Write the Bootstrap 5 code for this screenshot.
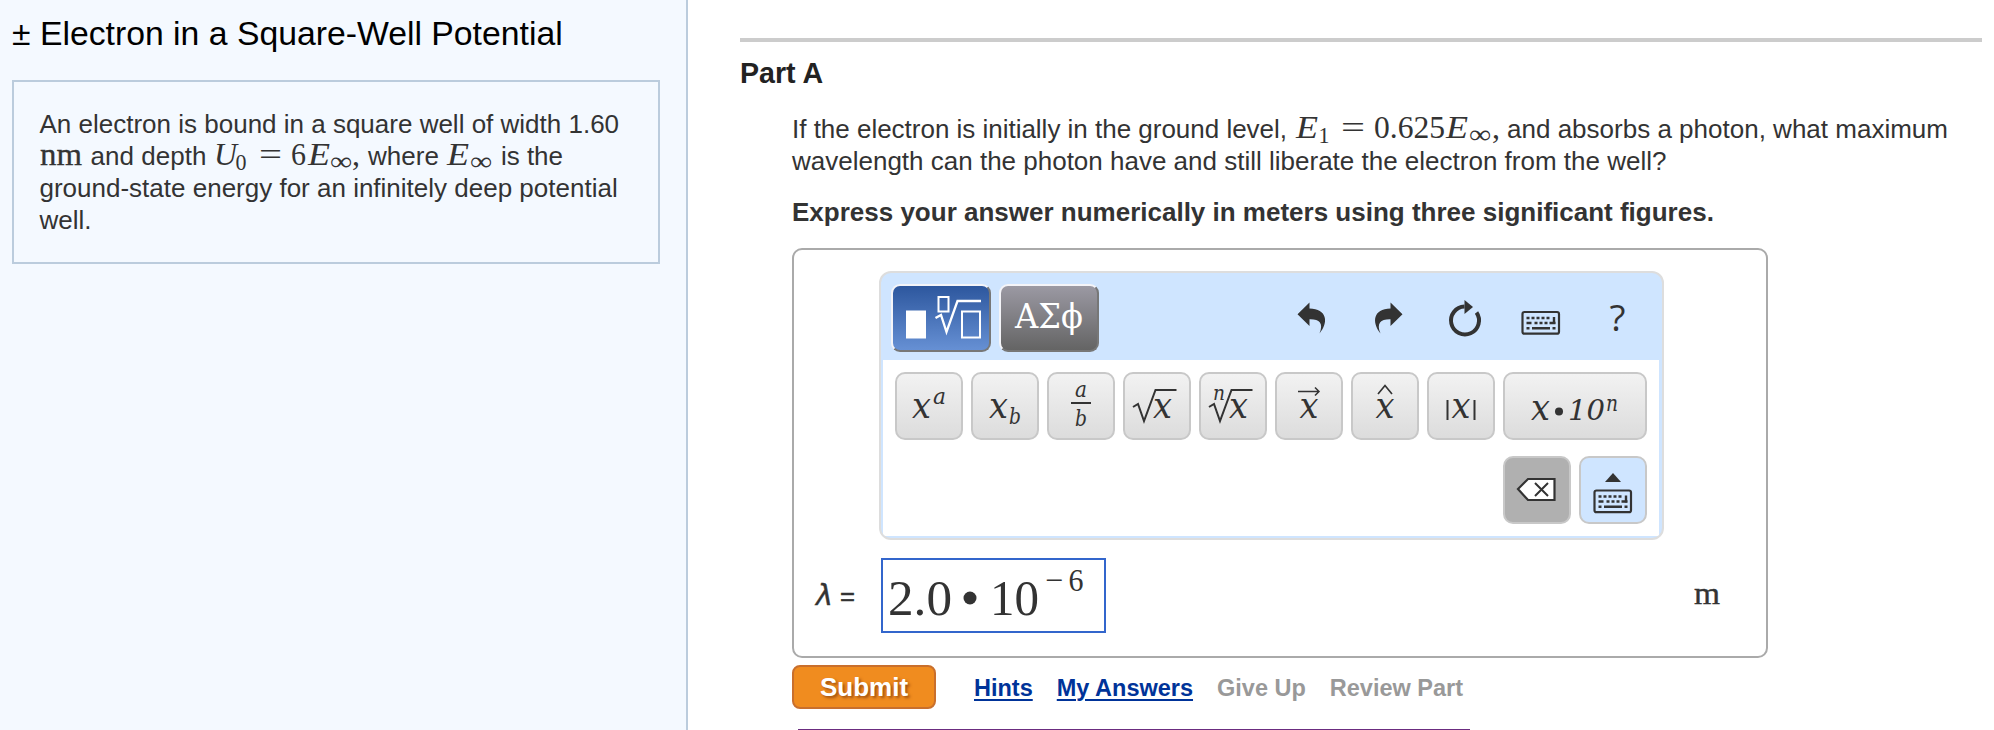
<!DOCTYPE html>
<html lang="en">
<head>
<meta charset="utf-8">
<title>Electron in a Square-Well Potential</title>
<link href="https://cdn.jsdelivr.net/npm/bootstrap@5.3.0/dist/css/bootstrap.min.css" rel="stylesheet">
<style>
body{font-family:"Liberation Sans",Arial,sans-serif;font-size:26px;line-height:32px;color:#333;background:#fff;height:730px;overflow:hidden}
.side{width:688px;height:730px;background:#f4f9ff;border-right:2px solid #bcd;padding:13px 26px 0 12px}
.side h1{font-size:33.75px;line-height:40px;color:#000;margin:0 0 27px;white-space:nowrap}
.intro{border:2px solid #bcd;height:184px;padding:26px 24px 0 25.500px;white-space:nowrap}
.work{width:1306px;padding:38px 12px 0 52px}
.rule{height:4px;background:#ccc}
.work h2{font-size:28.600px;line-height:32px;font-weight:700;color:#222;margin:15px 0 24px}
.question{margin-left:52px;white-space:nowrap}
.ln{display:flex;height:32px}
.instruct{margin:19px 0 20px}
.answer{width:976px;height:410px;border:2px solid #aaa;border-radius:10px;padding:21px 0 0 85px}
.pad{width:785px;height:269px;border:2px solid #ddd;border-radius:12px;background:#cfe5ff;overflow:hidden;padding:0 3px 2px 2px}
.bar{height:87px;padding:11px 3px 0 8px}
.tab{width:100px;height:68px;border:2px solid;border-color:#f4f4f8 #777 #777 #f4f4f8;border-radius:9px;padding:0;margin-right:8px;display:flex}
.tab.fx{background:linear-gradient(#2d579e,#6690d4)}
.tab.greek{background:linear-gradient(#9b99a3,#646464)}
.keys{background:#fff;height:176px;padding:12px}
.key{width:68px;height:68px;border:2px solid #c8c8c8;border-radius:10px;background:linear-gradient(#f2f2f2,#dcdcdc);padding:0;display:flex;flex:none}
.key.wide{width:144px}
.key.del{background:#b0b0b0}
.key.kb{background:#cfe5ff}
svg{display:block;flex:none;overflow:visible}
.key text,.tab text{font-family:"DejaVu Serif",serif;fill:#333;font-style:italic}
.tab text{fill:#fff;font-style:normal}
.ink{fill:none;stroke:#333;stroke-width:2}
.reply{margin:18px 0 0 -85px}
.entry{width:225px;height:75px;border:2px solid #36c}
.actions{margin-top:7px}
.submit{width:144px;height:44px;border:2px solid #c96f2c;border-radius:8px;background:#f08c1f;color:#fff;font-weight:700;font-size:26px;line-height:38px;padding:1px 0;text-shadow:2px 2px 3px #a05010;margin-right:38px}
.links{font-size:23.500px;font-weight:700;color:#999;padding-top:2px}
.links a{color:#039;text-decoration-thickness:2px;text-underline-offset:3px}
.next{border-top:2px solid #6b2c80;width:672px;margin:20px 0 0 6px}
</style>
</head>
<body>
<svg width="0" height="0" class="position-absolute"><defs>
<g id="kbd"><rect x="1" y="1" width="36.5" height="21.7" rx="2" fill="none" stroke="#333" stroke-width="2.2"/>
<path d="M5 7h3M10 7h3M15 7h3M20 7h3M25 7h3M5 12h5M13 12h3M18 12h3M23 12h3M28 12h6M5 17.3h3M10.5 17.3h18M31 17.3h3" stroke="#333" stroke-width="2.4" fill="none"/><path d="M32.5 6v7" stroke="#333" stroke-width="2.4"/></g>
</defs></svg>
<div class="d-flex">
<aside class="side flex-shrink-0">
<h1 class="fw-normal">± Electron in a Square-Well Potential</h1>
<div class="intro">
<div class="ln"><span>An electron is bound in a square well of width 1.60</span></div>
<div class="ln"><svg width="582" height="32" fill="#333"><g font-family="Liberation Serif,serif" font-size="32"><text x="0" y="25" font-size="31" textLength="42" lengthAdjust="spacingAndGlyphs" stroke="#333" stroke-width=".3">nm</text><text x="174" y="25" font-style="italic" textLength="23" lengthAdjust="spacingAndGlyphs">U</text><text x="195.500" y="30" font-size="23" textLength="11" lengthAdjust="spacingAndGlyphs">0</text><text x="219" y="25" textLength="23" lengthAdjust="spacingAndGlyphs">=</text><text x="251" y="25" textLength="15" lengthAdjust="spacingAndGlyphs">6</text><text x="268" y="25" font-style="italic" textLength="22" lengthAdjust="spacingAndGlyphs">E</text><text x="290" y="30" font-size="26" textLength="22" lengthAdjust="spacingAndGlyphs">∞</text><text x="407" y="25" font-style="italic" textLength="22" lengthAdjust="spacingAndGlyphs">E</text><text x="430" y="30" font-size="26" textLength="22" lengthAdjust="spacingAndGlyphs">∞</text><text x="312" y="25">,</text></g><text x="50.5" y="25" textLength="116">and depth</text><text x="328" y="25" textLength="71">where</text><text x="461" y="25" textLength="62">is the</text></svg></div>
<div class="ln"><span>ground-state energy for an infinitely deep potential</span></div>
<div class="ln"><span>well.</span></div>
</div>
</aside>
<main class="work">
<div class="rule"></div>
<h2>Part A</h2>
<div class="question">
<div class="ln"><svg width="1160" height="32" fill="#333"><text x="0" y="25" textLength="495">If the electron is initially in the ground level,</text><g font-family="Liberation Serif,serif" font-size="32"><text x="504" y="25" font-style="italic" textLength="22" lengthAdjust="spacingAndGlyphs">E</text><text x="526.500" y="30" font-size="23" textLength="11" lengthAdjust="spacingAndGlyphs">1</text><text x="549" y="25" textLength="24" lengthAdjust="spacingAndGlyphs">=</text><text x="582" y="25" textLength="71" lengthAdjust="spacingAndGlyphs">0.625</text><text x="654" y="25" font-style="italic" textLength="22" lengthAdjust="spacingAndGlyphs">E</text><text x="677" y="30" font-size="26" textLength="22" lengthAdjust="spacingAndGlyphs">∞</text><text x="700" y="25">,</text></g><text x="715" y="25" textLength="441">and absorbs a photon, what maximum</text></svg></div>
<div class="ln"><span>wavelength can the photon have and still liberate the electron from the well?</span></div>
<div class="ln fw-bold instruct"><span>Express your answer numerically in meters using three significant figures.</span></div>
<div class="answer">
<div class="pad">
<div class="bar d-flex">
<button class="tab fx"><svg width="96" height="64"><rect x="13" y="24.500" width="20" height="28" fill="#fff"/><g fill="none" stroke="#fff" stroke-width="2"><rect x="45.500" y="11" width="10" height="14.500"/><path d="M42.500 32l5.500-3 5.500 17 11-31h23.500" stroke-width="2.300"/><rect x="69" y="25.500" width="18" height="26"/></g></svg></button>
<button class="tab greek"><svg width="96" height="64"><text x="14" y="42" font-size="33" textLength="68" lengthAdjust="spacingAndGlyphs">ΑΣϕ</text></svg></button>
<div class="d-flex ms-auto">
<svg width="76" height="68"><path d="M21.500 30.300L33.500 18.500V24.500C51 25 53 38 43.500 49.500C48 39 43 35 33.500 35.300V42Z" fill="#333"/></svg>
<svg width="76" height="68"><path d="M50.500 30.300L38.500 18.500V24.500C21 25 19.500 38 28.500 49.500C24 39 29 35 38.500 35.300V42Z" fill="#333"/></svg>
<svg width="76" height="68"><path d="M48.500 28.500A14 14 0 1 1 36.500 22.500" fill="none" stroke="#333" stroke-width="4"/><path d="M36.500 16L45 23l-8.500 7z" fill="#333"/></svg>
<svg width="76" height="68"><use href="#kbd" x="17.500" y="27"/></svg>
<svg width="76" height="68"><text x="29.500" y="47" font-family="Open Sans,sans-serif" font-size="37" fill="#333">?</text></svg>
</div>
</div>
<div class="keys">
<div class="d-flex gap-2">
<button class="key"><svg width="64" height="64"><text x="15" y="43.500" font-size="35" textLength="19" lengthAdjust="spacingAndGlyphs">x</text><text x="36" y="30" font-size="22" textLength="13" lengthAdjust="spacingAndGlyphs">a</text></svg></button>
<button class="key"><svg width="64" height="64"><text x="16" y="43.500" font-size="35" textLength="19" lengthAdjust="spacingAndGlyphs">x</text><text x="36" y="50" font-size="23" textLength="12" lengthAdjust="spacingAndGlyphs">b</text></svg></button>
<button class="key"><svg width="64" height="64"><text x="26" y="23" font-size="22" textLength="12" lengthAdjust="spacingAndGlyphs">a</text><path class="ink" d="M22 29h20"/><text x="26" y="51.500" font-size="22" textLength="12" lengthAdjust="spacingAndGlyphs">b</text></svg></button>
<button class="key"><svg width="64" height="64"><path class="ink" d="M8 33l5-3 6 17 11.500-31h21"/><text x="28" y="43.500" font-size="35" textLength="19" lengthAdjust="spacingAndGlyphs">x</text></svg></button>
<button class="key"><svg width="64" height="64"><path class="ink" d="M8 33l5-3 6 17 11.500-31h21"/><text x="28" y="43.500" font-size="35" textLength="19" lengthAdjust="spacingAndGlyphs">x</text><text x="12" y="26" font-size="21" textLength="12" lengthAdjust="spacingAndGlyphs">n</text></svg></button>
<button class="key"><svg width="64" height="64"><path class="ink" style="stroke-width:1.500" d="M21 17.500h21M38 13.500l4 4-4 4"/><text x="22.500" y="43.500" font-size="35" textLength="19" lengthAdjust="spacingAndGlyphs">x</text></svg></button>
<button class="key"><svg width="64" height="64"><path class="ink" style="stroke-width:1.700" d="M25 20l7-8.500 7 8.500"/><text x="22.500" y="43.500" font-size="35" textLength="19" lengthAdjust="spacingAndGlyphs">x</text></svg></button>
<button class="key"><svg width="64" height="64"><path class="ink" d="M18.500 26v20M45.500 26v20"/><text x="22.500" y="43.500" font-size="35" textLength="19" lengthAdjust="spacingAndGlyphs">x</text></svg></button>
<button class="key wide"><svg width="140" height="64"><text x="26" y="45.500" font-size="35" textLength="19" lengthAdjust="spacingAndGlyphs">x</text><circle cx="54" cy="37.500" r="4" fill="#333"/><text x="63" y="45.500" font-size="27" textLength="37" lengthAdjust="spacingAndGlyphs">10</text><text x="101" y="37" font-size="22" textLength="12" lengthAdjust="spacingAndGlyphs">n</text></svg></button>
</div>
<div class="d-flex gap-2 justify-content-end mt-3">
<button class="key del"><svg width="64" height="64"><path d="M13 31l10-10h26.500v21H23z" fill="#fff" stroke="#333" stroke-width="2.200"/><path class="ink" d="M30 25l13 13M43 25L30 38"/></svg></button>
<button class="key kb"><svg width="64" height="64"><path d="M24 24l8-9 8 9z" fill="#333"/><use href="#kbd" x="12.500" y="31.500"/></svg></button>
</div>
</div>
</div>
<div class="d-flex reply">
<svg width="87" height="75" fill="#333"><text x="22" y="46.500" font-family="DejaVu Sans,sans-serif" font-style="italic" font-size="28.500" stroke="#333" stroke-width=".4">λ</text><text x="46" y="46.500" font-size="26" stroke="#333" stroke-width=".5" textLength="15" lengthAdjust="spacingAndGlyphs">=</text></svg>
<div class="entry"><svg width="221" height="71" font-family="Liberation Serif,serif" fill="#333"><text x="5" y="54.500" font-size="51" textLength="64" lengthAdjust="spacingAndGlyphs">2.0</text><circle cx="87" cy="38" r="6.500"/><text x="107" y="54.500" font-size="51" textLength="49" lengthAdjust="spacingAndGlyphs">10</text><text x="162" y="31" font-size="32">−</text><text x="185.500" y="31" font-size="32" textLength="15" lengthAdjust="spacingAndGlyphs">6</text></svg></div>
<svg width="660" height="75"><text x="588" y="46" font-family="Liberation Serif,serif" font-size="32" fill="#333" stroke="#333" stroke-width=".4" textLength="26" lengthAdjust="spacingAndGlyphs">m</text></svg>
</div>
</div>
<div class="d-flex align-items-center actions">
<button class="submit">Submit</button>
<div class="d-flex gap-4 links"><a href="#">Hints</a><a href="#">My Answers</a><span>Give Up</span><span>Review Part</span></div>
</div>
<div class="next"></div>
</div>
</main>
</div>
<script src="https://cdn.jsdelivr.net/npm/bootstrap@5.3.0/dist/js/bootstrap.bundle.min.js"></script>
</body>
</html>
